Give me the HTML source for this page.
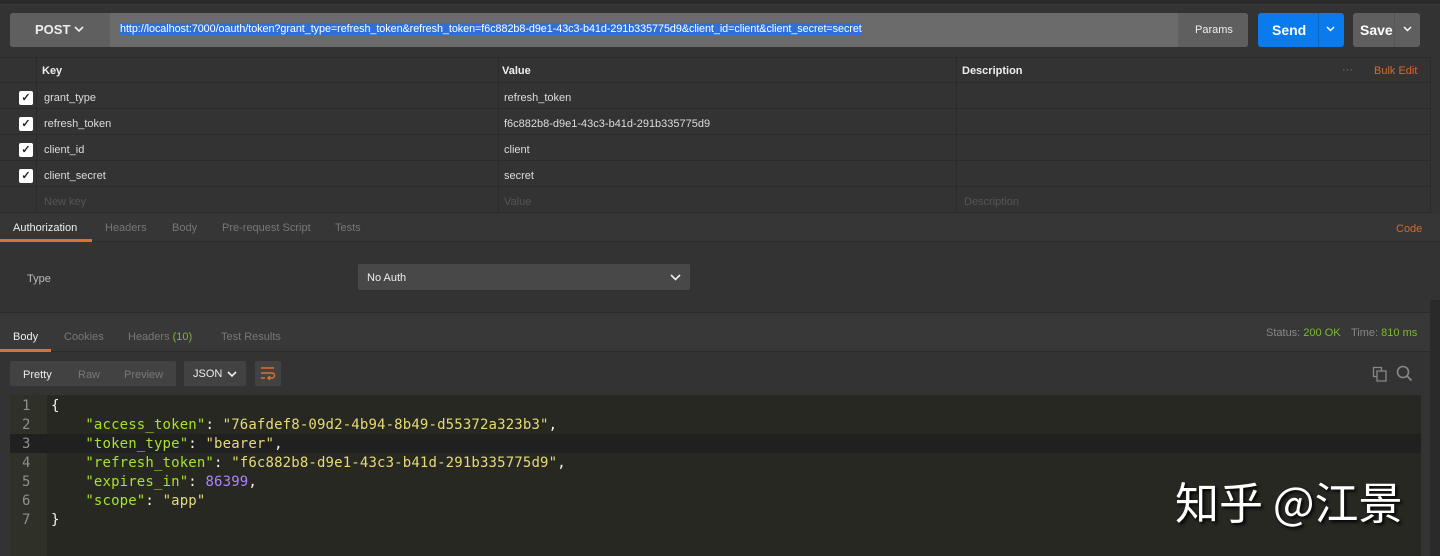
<!DOCTYPE html><html><head><meta charset="utf-8"><style>
*{box-sizing:border-box;margin:0;padding:0}
body{width:1440px;height:556px;background:#333;font-family:"Liberation Sans Narrow","Liberation Sans",sans-serif;font-size:11px;color:#ddd;position:relative;overflow:hidden}
.a{position:absolute}
.top{left:0;top:0;width:1440px;height:5px;background:#2a2a2a;border-bottom:1px solid #3a3a3a}
.row{left:0;width:1430px;height:26px;border-bottom:1px solid #2b2b2b}
.vl{position:absolute;top:57px;height:156px;width:1px;background:#2b2b2b}
.cb{position:absolute;left:19px;width:14px;height:14px;background:#fff;border-radius:2px;color:#222;font-size:11px;line-height:14px;text-align:center;font-weight:bold}
.t{position:absolute;white-space:nowrap}
.code{font-family:"DejaVu Sans Mono","Liberation Mono",monospace;font-size:14px}
.k{color:#a6e22e}.s{color:#e6db74}.n{color:#ae81ff}.w{color:#f8f8f2}
svg.ch{position:absolute}
</style></head><body>
<div class="a top"></div>
<div class="a" style="left:10px;top:13px;width:1238px;height:34px;background:#6b6b6b;border-radius:3px"></div>
<div class="a" style="left:10px;top:13px;width:100px;height:34px;background:#5f5f5f;border-radius:3px 0 0 3px"></div>
<div class="t" style="left:35px;top:22px;font-size:13px;color:#eee;font-weight:bold">POST</div>
<svg class="ch" style="left:74px;top:26px" width="10" height="7"><path d="M1 1l4 4 4-4" stroke="#eee" stroke-width="1.6" fill="none"/></svg>
<div class="t" style="left:120px;top:23px;font-size:10.8px;letter-spacing:-0.05px;color:#fff;background:#2f6fd6">http://localhost:7000/oauth/token?grant_type=refresh_token&amp;refresh_token=f6c882b8-d9e1-43c3-b41d-291b335775d9&amp;client_id=client&amp;client_secret=secret</div>
<div class="a" style="left:1178px;top:13px;width:70px;height:34px;background:#5f5f5f;border-radius:0 3px 3px 0"></div>
<div class="t" style="left:1195px;top:24px;color:#eee">Params</div>
<div class="a" style="left:1258px;top:13px;width:86px;height:34px;background:#097bed;border-radius:3px"></div>
<div class="a" style="left:1318px;top:13px;width:1px;height:34px;background:#0a67c4"></div>
<div class="t" style="left:1272px;top:22px;font-size:14px;color:#fff;font-weight:bold">Send</div>
<svg class="ch" style="left:1326px;top:26px" width="9" height="6"><path d="M1 1l3.5 3.5L8 1" stroke="#fff" stroke-width="1.5" fill="none"/></svg>
<div class="a" style="left:1353px;top:13px;width:67px;height:34px;background:#5f5f5f;border-radius:3px"></div>
<div class="a" style="left:1394px;top:13px;width:1px;height:34px;background:#555"></div>
<div class="t" style="left:1360px;top:22px;font-size:14px;color:#fff;font-weight:bold">Save</div>
<svg class="ch" style="left:1403px;top:26px" width="9" height="6"><path d="M1 1l3.5 3.5L8 1" stroke="#fff" stroke-width="1.5" fill="none"/></svg>

<div class="a row" style="top:57px;border-top:1px solid #2b2b2b"></div>
<div class="a row" style="top:83px"></div><div class="a row" style="top:109px"></div><div class="a row" style="top:135px"></div><div class="a row" style="top:161px"></div><div class="a row" style="top:187px"></div>
<div class="vl" style="left:36px"></div><div class="vl" style="left:498px"></div><div class="vl" style="left:956px"></div><div class="vl" style="left:1430px"></div>
<div class="t" style="left:42px;top:65px;font-weight:bold;color:#eee">Key</div>
<div class="t" style="left:502px;top:65px;font-weight:bold;color:#eee">Value</div>
<div class="t" style="left:962px;top:65px;font-weight:bold;color:#eee">Description</div>
<div class="t" style="left:1342px;top:64px;color:#777">···</div>
<div class="t" style="left:1374px;top:65px;color:#d7692b">Bulk Edit</div>
<div class="cb" style="top:91px">✓</div><div class="t" style="left:44px;top:92px">grant_type</div><div class="t" style="left:504px;top:92px">refresh_token</div>
<div class="cb" style="top:117px">✓</div><div class="t" style="left:44px;top:118px">refresh_token</div><div class="t" style="left:504px;top:118px">f6c882b8-d9e1-43c3-b41d-291b335775d9</div>
<div class="cb" style="top:143px">✓</div><div class="t" style="left:44px;top:144px">client_id</div><div class="t" style="left:504px;top:144px">client</div>
<div class="cb" style="top:169px">✓</div><div class="t" style="left:44px;top:170px">client_secret</div><div class="t" style="left:504px;top:170px">secret</div>
<div class="t" style="left:44px;top:196px;color:#555">New key</div><div class="t" style="left:504px;top:196px;color:#555">Value</div><div class="t" style="left:964px;top:196px;color:#555">Description</div>

<div class="a" style="left:0;top:214px;width:1440px;height:28px;background:#363636;border-bottom:1px solid #2b2b2b"></div>
<div class="t" style="left:13px;top:222px;color:#eee">Authorization</div>
<div class="a" style="left:0;top:239px;width:92px;height:3px;background:#e0702f"></div>
<div class="t" style="left:105px;top:222px;color:#777">Headers</div><div class="t" style="left:172px;top:222px;color:#777">Body</div><div class="t" style="left:222px;top:222px;color:#777">Pre-request Script</div><div class="t" style="left:335px;top:222px;color:#777">Tests</div>
<div class="t" style="left:1396px;top:223px;color:#d7692b">Code</div>
<div class="t" style="left:27px;top:273px;color:#bbb">Type</div>
<div class="a" style="left:358px;top:264px;width:332px;height:26px;background:#484848;border-radius:2px"></div>
<div class="t" style="left:367px;top:272px;color:#eee">No Auth</div>
<svg class="ch" style="left:670px;top:274px" width="11" height="7"><path d="M1 1l4.5 4.5L10 1" stroke="#eee" stroke-width="1.6" fill="none"/></svg>
<div class="a" style="left:0;top:312px;width:1430px;height:40px;background:#383838;border-top:1px solid #2b2b2b;border-bottom:1px solid #2b2b2b"></div>
<div class="t" style="left:13px;top:331px;color:#eee">Body</div>
<div class="a" style="left:0;top:349px;width:51px;height:3px;background:#e0702f"></div>
<div class="t" style="left:64px;top:331px;color:#777">Cookies</div>
<div class="t" style="left:128px;top:331px;color:#777">Headers <span style="color:#7cb82f">(10)</span></div>
<div class="t" style="left:221px;top:331px;color:#777">Test Results</div>
<div class="t" style="left:1266px;top:327px;color:#888">Status: <span style="color:#7cb82f">200 OK</span></div>
<div class="t" style="left:1351px;top:327px;color:#888">Time: <span style="color:#7cb82f">810 ms</span></div>
<div class="a" style="left:10px;top:361px;width:166px;height:25px;background:#424242;border-radius:2px"></div>
<div class="t" style="left:23px;top:369px;color:#eee">Pretty</div><div class="t" style="left:78px;top:369px;color:#777">Raw</div><div class="t" style="left:124px;top:369px;color:#777">Preview</div>
<div class="a" style="left:184px;top:361px;width:62px;height:25px;background:#424242;border-radius:2px"></div>
<div class="t" style="left:193px;top:368px;color:#eee">JSON</div>
<svg class="ch" style="left:227px;top:371px" width="10" height="7"><path d="M1 1l4 4 4-4" stroke="#eee" stroke-width="1.6" fill="none"/></svg>
<div class="a" style="left:255px;top:361px;width:26px;height:25px;background:#424242;border-radius:2px"></div>
<svg class="ch" style="left:260px;top:366px" width="16" height="15"><path d="M1 2h13M1 7h11a2.5 2.5 0 010 5H8M10 10l-2 2 2 2M1 12h4" stroke="#e0702f" stroke-width="1.5" fill="none"/></svg>
<svg class="ch" style="left:1372px;top:366px" width="16" height="16"><path d="M1.5 1.5h8v9h-8z" stroke="#888" stroke-width="1.3" fill="none"/><path d="M5 5h9v10H5z" stroke="#888" stroke-width="1.3" fill="#333"/></svg>
<svg class="ch" style="left:1396px;top:365px" width="17" height="17"><circle cx="7" cy="7" r="5.5" stroke="#888" stroke-width="1.6" fill="none"/><path d="M11 11l4.5 4.5" stroke="#888" stroke-width="1.8"/></svg>
<div class="a" style="left:10px;top:395px;width:1411px;height:161px;background:#272822"></div>
<div class="a" style="left:10px;top:395px;width:37px;height:161px;background:#2f3129"></div>
<div class="a" style="left:10px;top:434px;width:1411px;height:19px;background:#202020"></div>
<div class="a" style="left:1430px;top:300px;width:10px;height:256px;background:#2a2a2a"></div>
<div class="code" style="position:absolute;left:22px;top:397px;line-height:19px;color:#8f908a">1<br>2<br>3<br>4<br>5<br>6<br>7</div>
<div class="code w" style="position:absolute;left:51px;top:397px;line-height:19px;white-space:pre;letter-spacing:0.15px">{
    <span class="k">"access_token"</span>: <span class="s">"76afdef8-09d2-4b94-8b49-d55372a323b3"</span>,
    <span class="k">"token_type"</span>: <span class="s">"bearer"</span>,
    <span class="k">"refresh_token"</span>: <span class="s">"f6c882b8-d9e1-43c3-b41d-291b335775d9"</span>,
    <span class="k">"expires_in"</span>: <span class="n">86399</span>,
    <span class="k">"scope"</span>: <span class="s">"app"</span>
}</div>
<div class="t" style="left:1175px;top:468px;font-size:44px;color:#fff;font-family:'Noto Sans CJK SC',sans-serif;text-shadow:2px 2px 3px #000">知乎 @江景</div>
</body></html>
